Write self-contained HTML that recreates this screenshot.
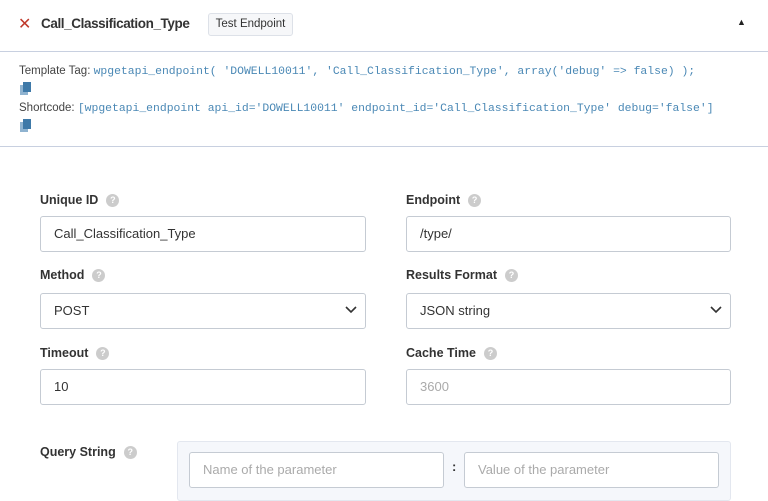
<!DOCTYPE html>
<html><head><meta charset="utf-8"><style>
*{box-sizing:border-box;margin:0;padding:0}
body{width:768px;height:498px;overflow:hidden;background:#fff;font-family:"Liberation Sans",sans-serif;color:#2c3338;position:relative}
.abs{position:absolute}
.hdr{top:0;left:0;width:768px;height:52px;border-bottom:1px solid #c8d0e0}
.code{top:53px;left:0;width:768px;height:94px;border-bottom:1px solid #c8d0e0;background:#fff}
.lbl{font-size:12.5px;font-weight:bold;color:#333}
.q{display:inline-block;width:13px;height:13px;border-radius:50%;background:#ccc;color:#fff;font-size:9px;text-align:center;line-height:13px;vertical-align:middle;margin-left:8px;font-weight:bold}
.inp{border:1px solid #c5cbd3;border-radius:3px;height:36px;font-size:13px;padding-left:13px;line-height:34px;color:#333;background:#fff}
.mono{font-family:"Liberation Mono",monospace;font-size:11.4px;color:#4a88b5}
.cl{font-size:11.5px;color:#444}
.chev{position:absolute;right:8px;top:11px}
</style></head><body>
<div class="abs hdr"></div>
<div class="abs" style="left:18px;top:14px;color:#c0392b;font-size:16px">✕</div>
<div class="abs" style="left:41px;top:16px;font-size:13.5px;letter-spacing:-0.4px;font-weight:bold;color:#333">Call_Classification_Type</div>
<div class="abs" style="left:208px;top:13px;width:85px;height:23px;border:1px solid #dde1e8;border-radius:3px;background:#f6f7f9;font-size:11.5px;text-align:center;line-height:21px;color:#333">Test Endpoint</div>
<div class="abs" style="left:737px;top:17px;font-size:9px;color:#222">▲</div>
<div class="abs code"></div>
<div class="abs cl" style="left:19px;top:65px;white-space:nowrap">Template Tag: <span class="mono">wpgetapi_endpoint( 'DOWELL10011', 'Call_Classification_Type', array('debug' =&gt; false) );</span></div>
<svg class="abs" style="left:20px;top:82px" width="12" height="13"><rect x="0" y="3" width="8" height="10" fill="#8fb3d0"/><rect x="3" y="0" width="8" height="10" fill="#3e79a8"/></svg>
<div class="abs cl" style="left:19px;top:102px;white-space:nowrap">Shortcode: <span class="mono">[wpgetapi_endpoint api_id='DOWELL10011' endpoint_id='Call_Classification_Type' debug='false']</span></div>
<svg class="abs" style="left:20px;top:119px" width="12" height="13"><rect x="0" y="3" width="8" height="10" fill="#8fb3d0"/><rect x="3" y="0" width="8" height="10" fill="#3e79a8"/></svg>

<div class="abs lbl" style="left:40px;top:193px">Unique ID<span class="q">?</span></div>
<div class="abs inp" style="left:40px;top:216px;width:326px">Call_Classification_Type</div>
<div class="abs lbl" style="left:406px;top:193px">Endpoint<span class="q">?</span></div>
<div class="abs inp" style="left:406px;top:216px;width:325px">/type/</div>

<div class="abs lbl" style="left:40px;top:268px">Method<span class="q">?</span></div>
<div class="abs inp" style="left:40px;top:293px;width:326px">POST<svg class="chev" width="12" height="10"><path d="M1 2l5 5 5-5" stroke="#333" stroke-width="1.6" fill="none"/></svg></div>
<div class="abs lbl" style="left:406px;top:268px">Results Format<span class="q">?</span></div>
<div class="abs inp" style="left:406px;top:293px;width:325px">JSON string<svg class="chev" width="12" height="10"><path d="M1 2l5 5 5-5" stroke="#333" stroke-width="1.6" fill="none"/></svg></div>

<div class="abs lbl" style="left:40px;top:346px">Timeout<span class="q">?</span></div>
<div class="abs inp" style="left:40px;top:369px;width:326px">10</div>
<div class="abs lbl" style="left:406px;top:346px">Cache Time<span class="q">?</span></div>
<div class="abs inp" style="left:406px;top:369px;width:325px;color:#aaa">3600</div>

<div class="abs lbl" style="left:40px;top:445px">Query String<span class="q">?</span></div>
<div class="abs" style="left:177px;top:441px;width:554px;height:60px;background:#f5f7fb;border:1px solid #e3e7ef;border-radius:3px"></div>
<div class="abs inp" style="left:189px;top:452px;width:255px;color:#aaa">Name of the parameter</div>
<div class="abs" style="left:452px;top:459px;font-size:13px;font-weight:bold;color:#333">:</div>
<div class="abs inp" style="left:464px;top:452px;width:255px;color:#aaa">Value of the parameter</div>
</body></html>
